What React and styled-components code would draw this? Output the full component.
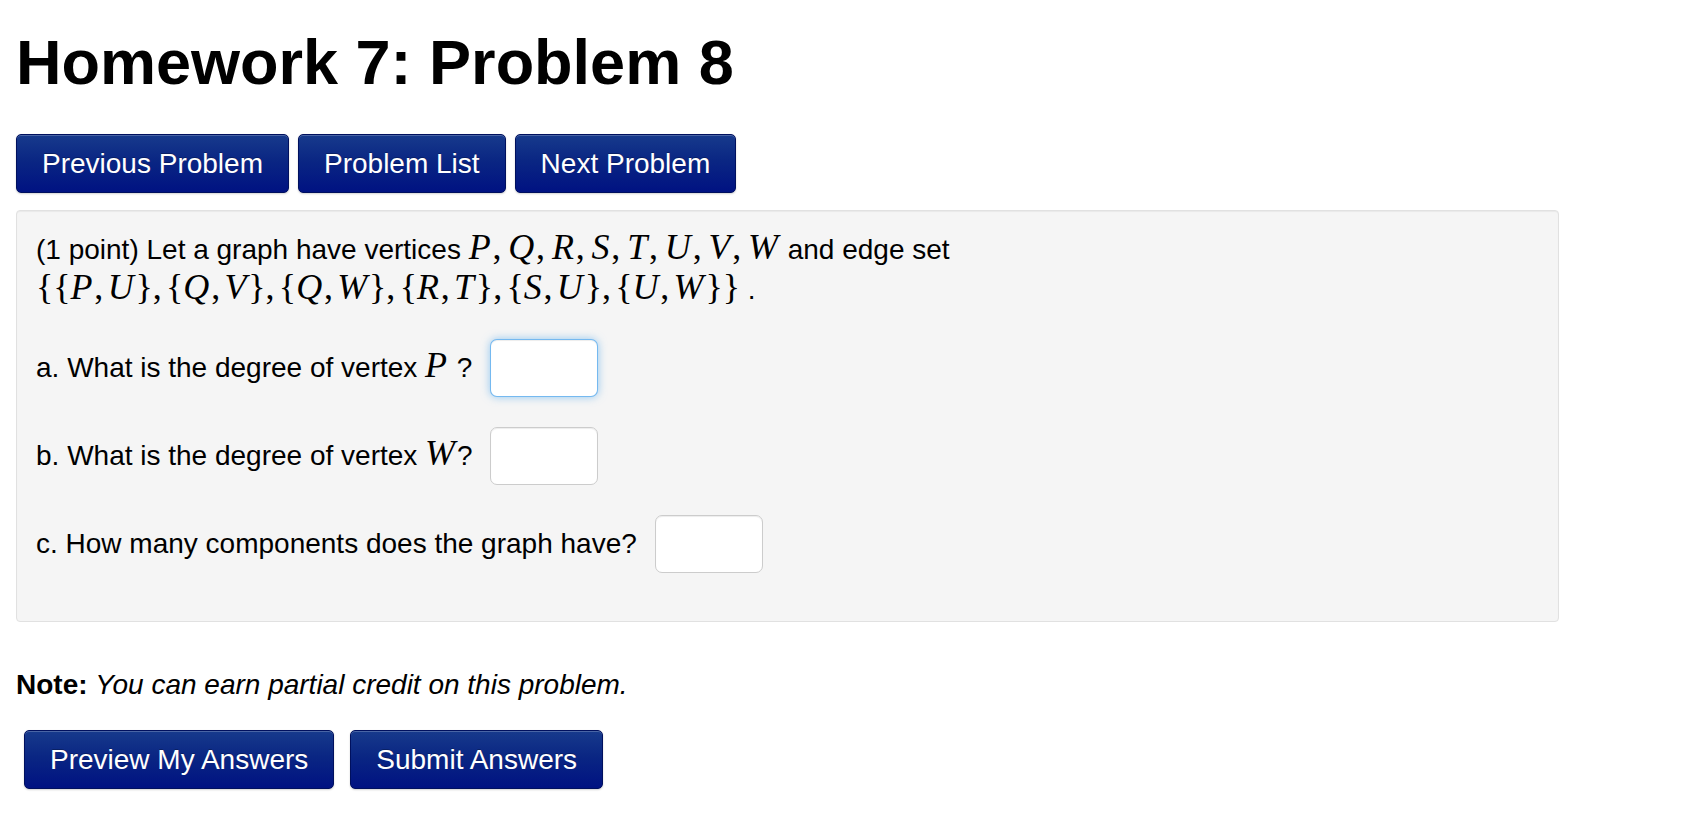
import React from 'react';
import styled, { createGlobalStyle, css } from 'styled-components';

const GlobalStyle = createGlobalStyle`
	body {
		margin: 0;
		background: #fff;
		color: #000;
		font-family: 'Liberation Sans', Arial, Helvetica, sans-serif;
	}
`;

function Tex({ expr, wide }) {
	return (
		<MathRun>
			{[...expr].map((ch, i) => {
				if (/[A-Z]/.test(ch)) return <Var key={i}>{ch}</Var>;
				if (ch === ',') return <Comma key={i} $wide={wide}>,</Comma>;
				return <Brace key={i}>{ch}</Brace>;
			})}
		</MathRun>
	);
}

const questions = [
	{ id: 'a', label: (<>a. What is the degree of vertex <Tex expr='P' /> ?</>), focused: true },
	{ id: 'b', label: (<>b. What is the degree of vertex <Tex expr='W' />?</>) },
	{ id: 'c', label: 'c. How many components does the graph have?' },
];

function App() {
	return (
		<Page>
			<GlobalStyle />
			<Title>Homework 7: Problem 8</Title>
			<NavBar>
				<NavButton>Previous Problem</NavButton>
				<NavButton>Problem List</NavButton>
				<NavButton>Next Problem</NavButton>
			</NavBar>
			<Well>
				<Statement>
					(1 point) Let a graph have vertices <Tex expr='P,Q,R,S,T,U,V,W' wide /> and edge set
					<br />
					<Tex expr='{{P,U},{Q,V},{Q,W},{R,T},{S,U},{U,W}}' /> .
				</Statement>
				<Questions>
					{questions.map((q) => (
						<Question key={q.id}>
							<Label>{q.label}</Label>
							<AnswerInput type='text' $focused={q.focused} />
						</Question>
					))}
				</Questions>
			</Well>
			<Note>
				<b>Note:</b> <i>You can earn partial credit on this problem.</i>
			</Note>
			<Actions>
				<NavButton>Preview My Answers</NavButton>
				<NavButton>Submit Answers</NavButton>
			</Actions>
		</Page>
	);
}

export default App;

const Page = styled.div`
	padding: 26px 0 40px 16px;
`;

const Title = styled.h1`
	margin: 0 0 36px;
	font-size: 63px;
	line-height: 72px;
	font-weight: 700;
`;

const NavBar = styled.div`
	display: flex;
	gap: 9px;
`;

const NavButton = styled.button`
	display: inline-flex;
	align-items: center;
	box-sizing: border-box;
	height: 59px;
	padding: 0 25px;
	border: 1px solid #00105e;
	border-radius: 5px;
	background: linear-gradient(to bottom, #173a8c 0%, #0a2683 45%, #001282 100%);
	box-shadow: inset 0 1px 0 rgba(255, 255, 255, 0.22), 0 1px 2px rgba(0, 0, 0, 0.18);
	color: #fff;
	font-family: 'Liberation Sans', Arial, Helvetica, sans-serif;
	font-size: 28px;
	text-shadow: 0 -1px 0 rgba(0, 0, 0, 0.25);
	cursor: pointer;
`;

const Well = styled.div`
	box-sizing: border-box;
	width: 1543px;
	margin-top: 17px;
	padding: 19px 19px 48px;
	background: #f5f5f5;
	border: 1px solid #e1e1e1;
	border-radius: 4px;
	box-shadow: inset 0 1px 1px rgba(0, 0, 0, 0.05);
`;

const Statement = styled.p`
	margin: 0;
	font-size: 28px;
	line-height: 40px;
`;

const MathRun = styled.span`
	font-family: 'Liberation Serif', 'Times New Roman', serif;
	font-size: 36px;
	line-height: 0;
	white-space: nowrap;
`;

const Var = styled.span`
	font-style: italic;
	padding-right: 0.05em;
`;

const Comma = styled.span`
	margin-right: ${(p) => (p.$wide ? '0.19em' : '0.12em')};
`;

const Brace = styled.span`
	font-style: normal;
`;

const Questions = styled.div`
	display: flex;
	flex-direction: column;
	gap: 30px;
	margin-top: 29px;
`;

const Question = styled.div`
	display: flex;
	align-items: center;
	height: 58px;
`;

const Label = styled.span`
	font-size: 28px;
	line-height: 40px;
	white-space: pre;
`;

const AnswerInput = styled.input`
	box-sizing: border-box;
	width: 108px;
	height: 58px;
	margin-left: 18px;
	border: 1px solid #cccccc;
	border-radius: 7px;
	background: #fff;
	box-shadow: inset 0 1px 1px rgba(0, 0, 0, 0.075);
	outline: none;
	font-size: 28px;

	${(p) =>
		p.$focused &&
		css`
			border-color: rgba(82, 168, 236, 0.8);
			box-shadow: inset 0 1px 1px rgba(0, 0, 0, 0.075), 0 0 8px rgba(82, 168, 236, 0.6);
		`}
`;

const Note = styled.p`
	margin: 43px 0 25px;
	font-size: 28px;
	line-height: 40px;

	i {
		font-style: italic;
	}
`;

const Actions = styled.div`
	display: flex;
	gap: 16px;
	margin-left: 8px;
`;
